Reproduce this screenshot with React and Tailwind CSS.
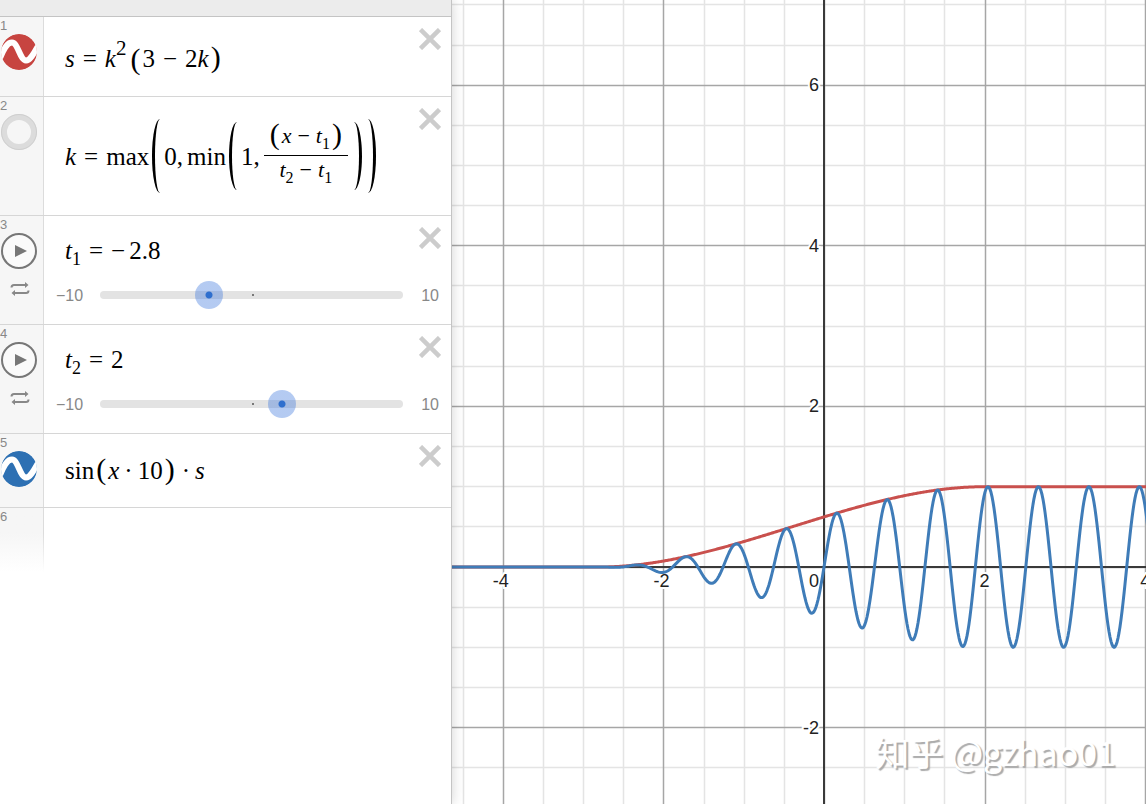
import { useState } from "react";

const UNIT = 80.3;
const ORIGIN = { x: 372, y: 567 };
const GRID_STEPS = 60;

const GRID_LINES = Array.from({ length: GRID_STEPS * 2 + 1 }, (_, i) => i - GRID_STEPS);

const X_LABELS = [-4, -2, 2, 4];
const Y_LABELS = [6, 4, 2, -2];

function smooth(x, t1, t2) {
  const k = Math.max(0, Math.min(1, (x - t1) / (t2 - t1)));
  return k * k * (3 - 2 * k);
}

function plot(fn) {
  const points = [];
  for (let px = -2; px <= 2400; px += 1) {
    const x = (px - ORIGIN.x) / UNIT;
    points.push(`${px},${(ORIGIN.y - fn(x) * UNIT).toFixed(2)}`);
  }
  return points.join(" ");
}

/* Math pieces */

function Var({ children }) {
  return <i>{children}</i>;
}

function Op({ children }) {
  return <span className="mx-2">{children}</span>;
}

function Sub({ children, small }) {
  return <span className={`leading-none translate-y-2 ${small ? "text-[16px]" : "text-[18px]"}`}>{children}</span>;
}

function Sup({ children }) {
  return <span className="text-[21px] leading-none -translate-y-2.5">{children}</span>;
}

function Paren({ children }) {
  return <span className="px-0.5 pb-1 text-[30px] leading-none">{children}</span>;
}

function TallParen({ side, size }) {
  const height = size === "lg" ? "h-[74px]" : "h-[68px]";
  const shape =
    side === "left"
      ? "ml-[3px] mr-1 border-l-[3px] [border-radius:100%_0_0_100%/50%_0_0_50%]"
      : "ml-1.5 border-r-[3px] [border-radius:0_100%_100%_0/0_50%_50%_0]";
  return <span className={`w-2 border-black ${height} ${shape}`} />;
}

function SmoothMath() {
  return (
    <>
      <Var>s</Var>
      <Op>=</Op>
      <Var>k</Var>
      <Sup>2</Sup>
      <span className="ml-0.5"><Paren>(</Paren></span>
      3<Op>−</Op>2<Var>k</Var>
      <Paren>)</Paren>
    </>
  );
}

function ClampMath() {
  return (
    <>
      <Var>k</Var>
      <Op>=</Op>
      max
      <TallParen side="left" size="lg" />
      <span>0</span>
      <span className="mr-1">,</span>
      <span>min</span>
      <TallParen side="left" size="sm" />
      <span>1</span>
      <span className="mr-1">,</span>
      <span className="flex flex-col items-center text-[22px]">
        <span className="flex h-9 items-center border-b border-black px-1 pb-1">
          <Paren>(</Paren>
          <Var>x</Var>
          <span className="mx-1.5">−</span>
          <Var>t</Var>
          <Sub small>1</Sub>
          <Paren>)</Paren>
        </span>
        <span className="flex h-9 items-center pb-2">
          <Var>t</Var>
          <Sub small>2</Sub>
          <span className="mx-1.5">−</span>
          <Var>t</Var>
          <Sub small>1</Sub>
        </span>
      </span>
      <TallParen side="right" size="sm" />
      <TallParen side="right" size="lg" />
    </>
  );
}

function SineMath() {
  return (
    <>
      sin
      <Paren>(</Paren>
      <Var>x</Var>
      <span className="mx-[5px]">·</span>
      10
      <Paren>)</Paren>
      <span className="mx-[5px]">·</span>
      <Var>s</Var>
    </>
  );
}

function SliderMath({ index, value }) {
  return (
    <>
      <Var>t</Var>
      <Sub>{index}</Sub>
      <Op>=</Op>
      {value < 0 && <span className="mr-1">−</span>}
      {Math.abs(value)}
    </>
  );
}

/* Gutter icons */

function CurveIcon({ fill, label }) {
  return (
    <button aria-label={label} className="ml-px block size-9 overflow-hidden rounded-full">
      <svg viewBox="0 0 36 36" className="size-9">
        <circle cx="18" cy="18" r="18" fill={fill} />
        <path d="M-1 24C4 12 7 8.500 11 8.500C17 8.500 19 26.500 25 26.500C29 26.500 32 21 37 12" fill="none" stroke="#fff" strokeWidth="6" />
      </svg>
    </button>
  );
}

function HiddenIcon() {
  return (
    <button aria-label="Show expression" className="ml-px block size-9 rounded-full border-[6px] border-[#dcdcdc] bg-[#f6f6f6] outline outline-1 -outline-offset-1 outline-[#cfcfcf]" />
  );
}

function PlayIcons() {
  return (
    <>
      <button aria-label="Play" className="ml-px flex size-9 items-center justify-center rounded-full border-2 border-[#777] bg-[#fafafa]">
        <svg viewBox="0 0 12 12" className="ml-1 size-3" fill="#777">
          <path d="M0 0L12 6L0 12Z" />
        </svg>
      </button>
      <button aria-label="Loop mode" className="mt-[13px] ml-2.5 block">
        <svg viewBox="0 0 20 14" className="h-3.5 w-5" fill="none" stroke="#888" strokeWidth="2">
          <path d="M1.500 5.500Q1.500 3 4 3H16M18.500 8.500Q18.500 11 16 11H4" />
          <path d="M15 0L18.500 3L15 6ZM5 8L1.500 11L5 14Z" fill="#888" stroke="none" />
        </svg>
      </button>
    </>
  );
}

function Slider({ label, value, onChange }) {
  return (
    <div className="flex h-7 items-center px-3 font-['Liberation_Sans',sans-serif] text-[16px] text-[#888]">
      <span className="w-11 pt-0.5">−10</span>
      <div className="relative flex h-7 flex-1 items-center">
        <div className="h-2 w-full rounded-full bg-[#e3e3e3]" />
        <span className="absolute left-1/2 size-0.5 rounded-full bg-[#555]" />
        <input
          type="range"
          min="-10"
          max="10"
          step="0.1"
          aria-label={label}
          value={value}
          onChange={(e) => onChange(Number(e.target.value))}
          className="absolute -inset-x-3.5 h-7 cursor-pointer appearance-none bg-transparent [&::-webkit-slider-thumb]:size-7 [&::-webkit-slider-thumb]:appearance-none [&::-webkit-slider-thumb]:rounded-full [&::-webkit-slider-thumb]:bg-[radial-gradient(circle,#2f6fce_3px,rgba(58,117,220,0.38)_4px)]"
        />
      </div>
      <span className="w-9 pt-0.5 text-right">10</span>
    </div>
  );
}

function Row({ number, icon, height, onClose, children, slider }) {
  return (
    <li className="flex border-b border-[#d6d6d6]">
      <div className="w-11 shrink-0 border-r border-[#dcdcdc] bg-[#f6f6f6]">
        <div className="h-[17px] text-[13px] leading-[18px] text-[#888]">{number}</div>
        {icon}
      </div>
      <div className={`flex-1 ${slider ? "pb-[15px]" : ""}`}>
        <div className={`flex pl-[21px] pr-2.5 ${height}`}>
          <div className={`flex flex-1 items-center whitespace-pre font-['Liberation_Serif',serif] text-[25px] leading-none text-black ${slider || number === 1 ? "pt-1" : ""}`}>
            {children}
          </div>
          <button aria-label={`Delete expression ${number}`} onClick={onClose} className="mt-[11px] self-start">
            <svg viewBox="0 0 22 22" className="size-[22px]" stroke="#ccc" strokeWidth="4.500">
              <path d="M1.500 1.500L20.500 20.500M20.500 1.500L1.500 20.500" />
            </svg>
          </button>
        </div>
        {slider}
      </div>
    </li>
  );
}

function Graph({ t1, t2, showS, showSin }) {
  return (
    <svg className="block h-full w-full" role="img" aria-label="Graph">
      {[false, true].map((major) => (
        <g key={String(major)} stroke={major ? "#a6a6a6" : "#e4e4e4"} strokeWidth="1.500">
          {GRID_LINES.filter((n) => (n % 4 === 0) === major).map((n) => {
            const x = Math.round(ORIGIN.x + (n * UNIT) / 2) + 0.5;
            const y = Math.floor(ORIGIN.y + (n * UNIT) / 2) + 0.5;
            return (
              <g key={n}>
                <line x1={x} x2={x} y1="0" y2="100%" />
                <line x1="0" x2="100%" y1={y} y2={y} />
              </g>
            );
          })}
        </g>
      ))}
      <g stroke="#3a3a3a" strokeWidth="2">
        <line x1={ORIGIN.x} x2={ORIGIN.x} y1="0" y2="100%" />
        <line x1="0" x2="100%" y1={ORIGIN.y} y2={ORIGIN.y} />
      </g>
      <g
        className="font-['Liberation_Sans',sans-serif] text-[18px]"
        fill="#222"
        stroke="#fff"
        strokeWidth="4"
        paintOrder="stroke"
      >
        {X_LABELS.map((n) => (
          <text key={n} x={ORIGIN.x + n * UNIT - (n < 0 ? 2 : 0)} y={ORIGIN.y + 20} textAnchor="middle">{n}</text>
        ))}
        {Y_LABELS.map((n) => (
          <text key={n} x={ORIGIN.x - 5} y={ORIGIN.y - n * UNIT + 6} textAnchor="end">{n}</text>
        ))}
        <text x={ORIGIN.x - 5} y={ORIGIN.y + 20} textAnchor="end">0</text>
      </g>
      <g fill="none" strokeWidth="3" strokeLinejoin="round">
        {showS && <polyline points={plot((x) => smooth(x, t1, t2))} stroke="#c9504d" />}
        {showSin && <polyline points={plot((x) => Math.sin(x * 10) * smooth(x, t1, t2))} stroke="#3f7cb8" />}
      </g>
    </svg>
  );
}

export default function App() {
  const [t1, setT1] = useState(-2.8);
  const [t2, setT2] = useState(2);
  const [removed, setRemoved] = useState([]);

  const remove = (n) => setRemoved((r) => [...r, n]);

  const rows = [
    { number: 1, height: "h-[79px]", icon: <CurveIcon fill="#c74440" label="Hide expression" />, math: <SmoothMath /> },
    { number: 2, height: "h-[118px]", icon: <HiddenIcon />, math: <ClampMath /> },
    {
      number: 3,
      height: "h-[65px]",
      icon: <PlayIcons />,
      math: <SliderMath index={1} value={t1} />,
      slider: <Slider label="t1" value={t1} onChange={setT1} />,
    },
    {
      number: 4,
      height: "h-[65px]",
      icon: <PlayIcons />,
      math: <SliderMath index={2} value={t2} />,
      slider: <Slider label="t2" value={t2} onChange={setT2} />,
    },
    { number: 5, height: "h-[73px]", icon: <CurveIcon fill="#2d70b3" label="Hide expression" />, math: <SineMath /> },
  ];

  return (
    <div className="flex h-screen overflow-hidden bg-white font-['Liberation_Sans',sans-serif]">
      {/* Expression list */}
      <aside className="relative z-10 w-[452px] shrink-0 border-r border-[#c4c4c4] bg-white shadow-[0_0_12px_rgba(0,0,0,0.18)]">
        <div className="h-[17px] border-b border-[#c4c4c4] bg-[#ececec]" />
        <ol>
          {rows
            .filter((row) => !removed.includes(row.number))
            .map((row) => (
              <Row key={row.number} number={row.number} icon={row.icon} height={row.height} slider={row.slider} onClose={() => remove(row.number)}>
                {row.math}
              </Row>
            ))}
        </ol>
        <div className="flex h-16">
          <div className="w-[43px] bg-linear-to-b from-[#f6f6f6] from-40% to-white text-[13px] leading-[18px] text-[#888]">6</div>
          <div className="w-px bg-linear-to-b from-[#dcdcdc] from-40% to-white" />
        </div>
      </aside>

      {/* Graph paper */}
      <main className="relative min-w-0 flex-1">
        <Graph t1={t1} t2={t2} showS={!removed.includes(1)} showSin={!removed.includes(5)} />
        <div className="absolute right-[30px] bottom-7 whitespace-pre font-['Noto_Sans_CJK_SC',sans-serif] text-[34px] leading-[48px] text-white [text-shadow:2px_2px_1px_#aaa]">
          知乎 @gzhao01
        </div>
      </main>
    </div>
  );
}
